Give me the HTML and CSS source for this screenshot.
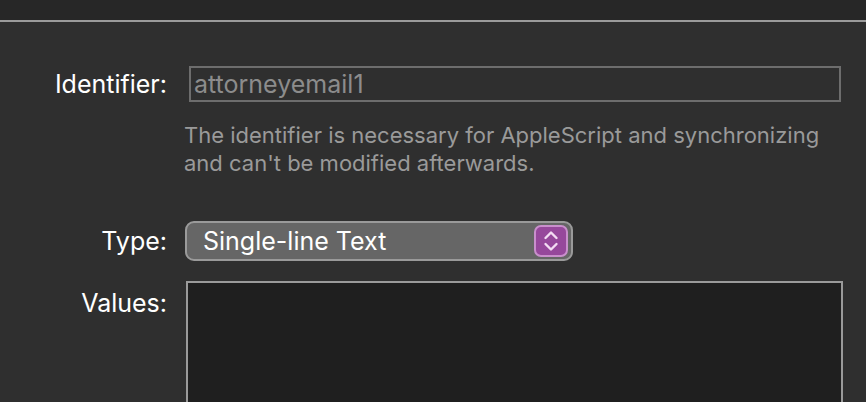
FILE: index.html
```html
<!DOCTYPE html>
<html>
<head>
<meta charset="utf-8">
<link rel="stylesheet" href="styles.css">
</head>
<body>
<div class="topbar"></div>
<div class="form">
  <div class="row row-id">
    <div class="label">Identifier:</div>
    <div class="field">
      <div class="idbox">attorneyemail1</div>
      <div class="help">The identifier is necessary for AppleScript and synchronizing<br>and can't be modified afterwards.</div>
    </div>
  </div>
  <div class="row row-type">
    <div class="label">Type:</div>
    <div class="field">
      <div class="popup">
        <span class="popup-text">Single-line Text</span>
        <span class="stepper">
          <svg width="20" height="26" viewBox="0 0 20 26">
            <path d="M4.5 10 L10 4.5 L15.5 10" fill="none" stroke="#f3dcf3" stroke-width="2.4" stroke-linecap="round" stroke-linejoin="round"/>
            <path d="M4.5 16 L10 21.5 L15.5 16" fill="none" stroke="#f3dcf3" stroke-width="2.4" stroke-linecap="round" stroke-linejoin="round"/>
          </svg>
        </span>
      </div>
    </div>
  </div>
  <div class="row row-values">
    <div class="label">Values:</div>
    <div class="field">
      <div class="valuesbox"></div>
    </div>
  </div>
</div>
</body>
</html>
```

FILE: styles.css
```css
html, body {
  margin: 0;
  padding: 0;
  background: #2f2f2f;
  height: 402px;
  overflow: hidden;
  font-family: "Inter", "Liberation Sans", sans-serif;
}
.topbar {
  height: 20px;
  background: #272727;
  border-bottom: 2px solid #9b9b9b;
}
.form {
  display: flex;
  flex-direction: column;
}
.row {
  display: grid;
  grid-template-columns: 167px 1fr;
  align-items: start;
}
.label {
  color: #ffffff;
  font-size: 25px;
  line-height: 36px;
  text-align: right;
  white-space: nowrap;
}
.row-id {
  margin-top: 44px;
}
.row-id .field {
  padding-left: 22px;
}
.idbox {
  width: 645px;
  height: 32px;
  border: 2px solid #6d6d6d;
  color: #8c8c8c;
  font-size: 25px;
  line-height: 32px;
  padding-left: 3px;
  box-sizing: content-box;
}
.help {
  margin-top: 19px;
  margin-left: -5px;
  color: #9a9a9a;
  font-size: 22px;
  line-height: 28px;
}
.row-type {
  margin-top: 44px;
}
.row-type .label {
  line-height: 40px;
}
.row-type .field {
  padding-left: 18px;
}
.popup {
  height: 36px;
  border: 2px solid #9a9a9a;
  border-radius: 9px;
  background: #666666;
  display: flex;
  align-items: center;
  justify-content: space-between;
  padding-left: 16px;
  padding-right: 3px;
  box-sizing: content-box;
  width: 365px;
}
.popup-text {
  color: #ffffff;
  font-size: 25px;
}
.stepper {
  width: 30px;
  height: 28px;
  border: 2px solid #c98fcc;
  border-radius: 7px;
  background: #96489b;
  display: flex;
  align-items: center;
  justify-content: center;
}
.row-values {
  margin-top: 20px;
}
.row-values .label {
  line-height: 40px;
  padding-top: 2px;
}
.row-values .field {
  padding-left: 19px;
}
.valuesbox {
  width: 653px;
  height: 119px;
  border: 2px solid #9a9a9a;
  border-bottom: none;
  background: #1f1f1f;
}
```
